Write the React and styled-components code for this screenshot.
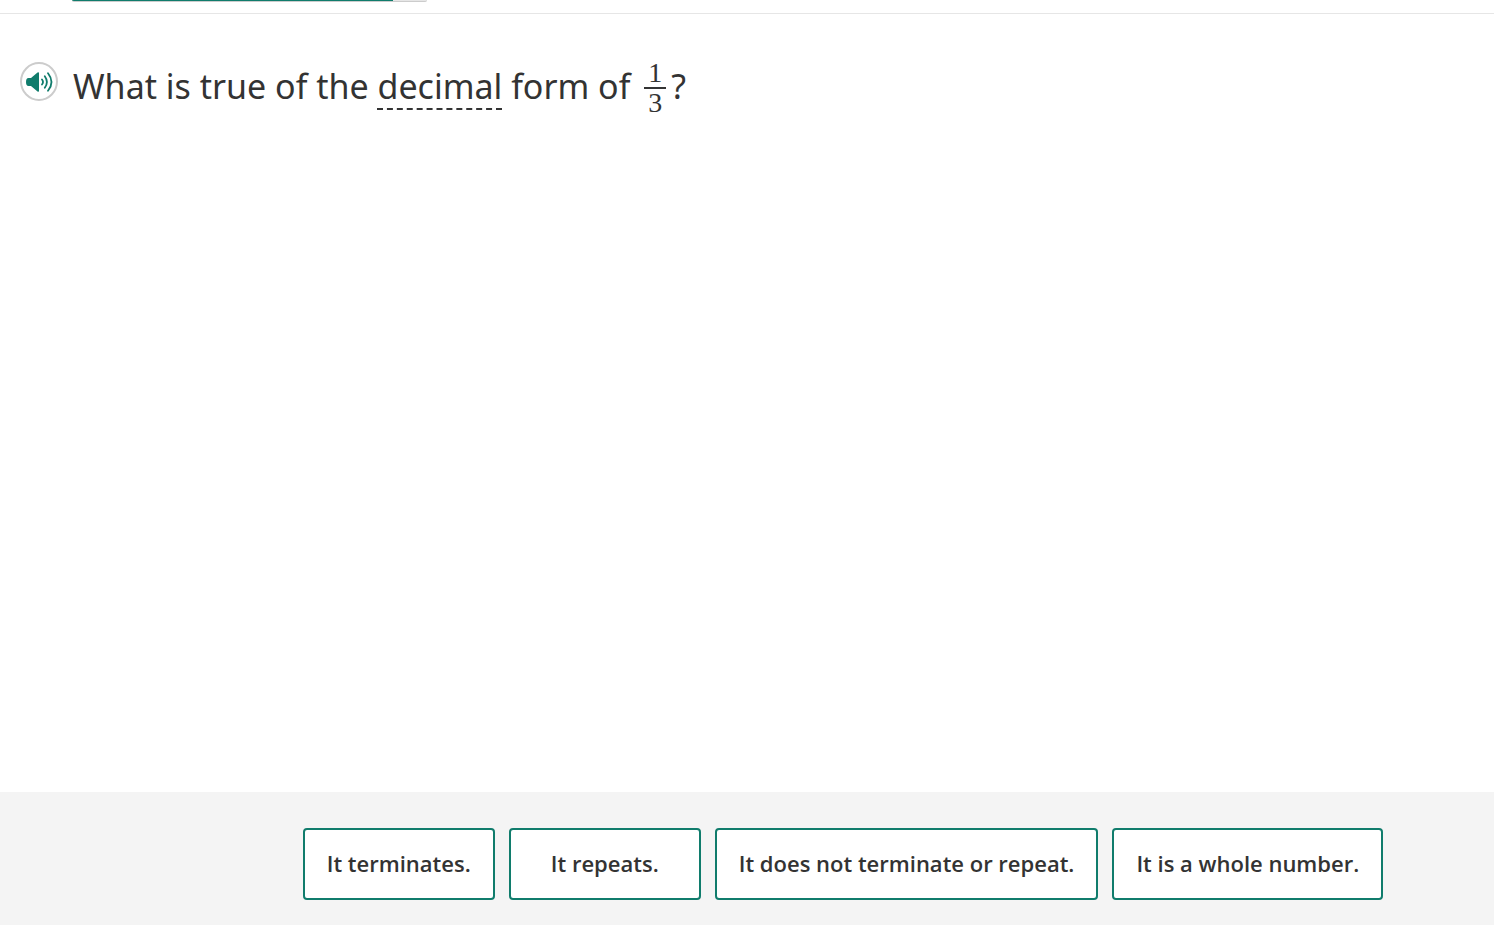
import React, { useState } from 'react';
import styled, { createGlobalStyle } from 'styled-components';

const GlobalStyle = createGlobalStyle`
  * {
    box-sizing: border-box;
  }
  body {
    margin: 0;
    background: #fff;
    color: #333;
    font-family: 'Open Sans', 'Noto Sans', sans-serif;
  }
`;

const Page = styled.div`
  min-height: 100vh;
  display: flex;
  flex-direction: column;
`;

const Header = styled.header`
  height: 14px;
  padding-left: 72px;
  border-bottom: 1px solid #e6e6e6;
`;

const ProgressTrack = styled.div`
  width: 355px;
  height: 2px;
  overflow: hidden;
  background: #e6e6e6;
  border-bottom: 1px solid #ccc;
  border-radius: 0 0 8px 8px;
`;

const ProgressFill = styled.div`
  height: 100%;
  background: #107c6c;
`;

const Main = styled.main`
  flex: 1;
  display: flex;
  align-items: flex-start;
  padding: 45px 20px;
`;

const AudioButton = styled.button`
  flex: none;
  width: 38px;
  height: 39px;
  margin: 3px 15px 0 0;
  padding: 0;
  display: flex;
  align-items: center;
  justify-content: center;
  background: #fff;
  border: 2px solid #ccc;
  border-radius: 50%;
  color: #107c6c;
  cursor: pointer;
`;

const Question = styled.h1`
  margin: 0;
  font-family: 'Noto Sans', 'Open Sans', sans-serif;
  font-size: 34px;
  font-weight: 400;
  line-height: 48px;
`;

const Term = styled.span`
  display: inline-block;
  line-height: 44px;
  border-bottom: 2px dashed #333;
`;

const Fraction = styled.span`
  display: inline-flex;
  flex-direction: column;
  vertical-align: middle;
  margin: 0 5px;
  padding-bottom: 4px;
  font-family: 'Liberation Serif', serif;
  font-size: 28px;
  line-height: 28px;
  text-align: center;
`;

const Numerator = styled.span`
  padding: 0 4px;
  border-bottom: 2px solid #333;
`;

const Denominator = styled.span`
  padding: 0 4px;
`;

const Footer = styled.footer`
  display: flex;
  flex-wrap: wrap;
  justify-content: center;
  gap: 14px;
  padding: 36px 16px 25px 208px;
  background: #f4f4f4;
`;

const AnswerButton = styled.button`
  min-width: 192px;
  height: 72px;
  padding: 0 22px 2px;
  background: #fff;
  border: 2px solid #107c6c;
  border-radius: 4px;
  color: #333;
  font-family: inherit;
  font-size: 22px;
  font-weight: 600;
  cursor: pointer;
`;

const answers = [
  'It terminates.',
  'It repeats.',
  'It does not terminate or repeat.',
  'It is a whole number.',
];

const SpeakerIcon = () => (
  <svg width='28' height='24' viewBox='0 0 28 24' fill='none' aria-hidden='true'>
    <path
      d='M3.5 8H6L12.5 2.6Q14 1.6 14 3.2V20.8Q14 22.4 12.5 21.4L6 16H3.5Q1 16 1 12Q1 8 3.5 8Z'
      fill='currentColor'
    />
    <path
      d='M17 9.5Q19 12 17 14.5M19.8 6.2Q24 12 19.8 17.8M23 3.2Q30 12 23 20.8'
      stroke='currentColor'
      strokeWidth='1.8'
      strokeLinecap='round'
    />
  </svg>
);

const App = () => {
  const [selected, setSelected] = useState(null);

  return (
    <Page>
      <GlobalStyle />
      <Header>
        <ProgressTrack role='progressbar' aria-label='Progress' aria-valuenow={90}>
          <ProgressFill style={{ width: '90.5%' }} />
        </ProgressTrack>
      </Header>
      <Main>
        <AudioButton type='button' aria-label='Listen'>
          <SpeakerIcon />
        </AudioButton>
        <Question>
          What is true of the <Term>decimal</Term> form of{' '}
          <Fraction>
            <Numerator>1</Numerator>
            <Denominator>3</Denominator>
          </Fraction>
          ?
        </Question>
      </Main>
      <Footer>
        {answers.map((answer) => (
          <AnswerButton
            key={answer}
            type='button'
            aria-pressed={selected === answer}
            onClick={() => setSelected(answer)}
          >
            {answer}
          </AnswerButton>
        ))}
      </Footer>
    </Page>
  );
};

export default App;
